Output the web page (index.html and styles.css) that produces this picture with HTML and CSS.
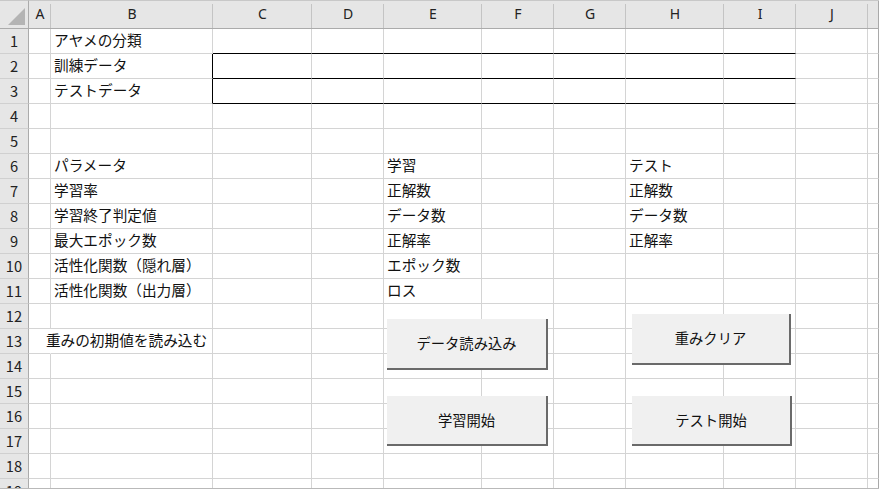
FILE: index.html
```html
<!DOCTYPE html>
<html lang="ja">
<head>
<meta charset="utf-8">
<title>アヤメの分類</title>
<link rel="stylesheet" href="styles.css">
</head>
<body>
<div class="sheet">
  <div class="row hdr">
    <div class="corner"><span class="tri"></span></div>
    <div class="ch">A</div><div class="ch">B</div><div class="ch">C</div><div class="ch">D</div><div class="ch">E</div><div class="ch">F</div><div class="ch">G</div><div class="ch">H</div><div class="ch">I</div><div class="ch">J</div><div class="ch"></div>
  </div>
  <div class="row">
    <div class="rh">1</div><div class="c"></div><div class="c">アヤメの分類</div><div class="c bb"></div><div class="c bb"></div><div class="c bb"></div><div class="c bb"></div><div class="c bb"></div><div class="c bb"></div><div class="c bb"></div><div class="c"></div><div class="c end"></div>
  </div>
  <div class="row">
    <div class="rh">2</div><div class="c"></div><div class="c br">訓練データ</div><div class="c bb"></div><div class="c bb"></div><div class="c bb"></div><div class="c bb"></div><div class="c bb"></div><div class="c bb"></div><div class="c bb"></div><div class="c"></div><div class="c end"></div>
  </div>
  <div class="row">
    <div class="rh">3</div><div class="c"></div><div class="c br">テストデータ</div><div class="c bb"></div><div class="c bb"></div><div class="c bb"></div><div class="c bb"></div><div class="c bb"></div><div class="c bb"></div><div class="c bb"></div><div class="c"></div><div class="c end"></div>
  </div>
  <div class="row">
    <div class="rh">4</div><div class="c"></div><div class="c"></div><div class="c"></div><div class="c"></div><div class="c"></div><div class="c"></div><div class="c"></div><div class="c"></div><div class="c"></div><div class="c"></div><div class="c end"></div>
  </div>
  <div class="row">
    <div class="rh">5</div><div class="c"></div><div class="c"></div><div class="c"></div><div class="c"></div><div class="c"></div><div class="c"></div><div class="c"></div><div class="c"></div><div class="c"></div><div class="c"></div><div class="c end"></div>
  </div>
  <div class="row">
    <div class="rh">6</div><div class="c"></div><div class="c">パラメータ</div><div class="c"></div><div class="c"></div><div class="c">学習</div><div class="c"></div><div class="c"></div><div class="c">テスト</div><div class="c"></div><div class="c"></div><div class="c end"></div>
  </div>
  <div class="row">
    <div class="rh">7</div><div class="c"></div><div class="c">学習率</div><div class="c"></div><div class="c"></div><div class="c">正解数</div><div class="c"></div><div class="c"></div><div class="c">正解数</div><div class="c"></div><div class="c"></div><div class="c end"></div>
  </div>
  <div class="row">
    <div class="rh">8</div><div class="c"></div><div class="c">学習終了判定値</div><div class="c"></div><div class="c"></div><div class="c">データ数</div><div class="c"></div><div class="c"></div><div class="c">データ数</div><div class="c"></div><div class="c"></div><div class="c end"></div>
  </div>
  <div class="row">
    <div class="rh">9</div><div class="c"></div><div class="c">最大エポック数</div><div class="c"></div><div class="c"></div><div class="c">正解率</div><div class="c"></div><div class="c"></div><div class="c">正解率</div><div class="c"></div><div class="c"></div><div class="c end"></div>
  </div>
  <div class="row">
    <div class="rh">10</div><div class="c"></div><div class="c">活性化関数（隠れ層）</div><div class="c"></div><div class="c"></div><div class="c">エポック数</div><div class="c"></div><div class="c"></div><div class="c"></div><div class="c"></div><div class="c"></div><div class="c end"></div>
  </div>
  <div class="row">
    <div class="rh">11</div><div class="c"></div><div class="c">活性化関数（出力層）</div><div class="c"></div><div class="c"></div><div class="c">ロス</div><div class="c"></div><div class="c"></div><div class="c"></div><div class="c"></div><div class="c"></div><div class="c end"></div>
  </div>
  <div class="row">
    <div class="rh">12</div><div class="c"></div><div class="c"></div><div class="c"></div><div class="c"></div><div class="c"></div><div class="c"></div><div class="c"></div><div class="c"></div><div class="c"></div><div class="c"></div><div class="c end"></div>
  </div>
  <div class="row">
    <div class="rh">13</div><div class="c nr"></div><div class="c center"><span>重みの初期値を読み込む</span></div><div class="c"></div><div class="c"></div><div class="c"></div><div class="c"></div><div class="c"></div><div class="c"></div><div class="c"></div><div class="c"></div><div class="c end"></div>
  </div>
  <div class="row">
    <div class="rh">14</div><div class="c"></div><div class="c"></div><div class="c"></div><div class="c"></div><div class="c"></div><div class="c"></div><div class="c"></div><div class="c"></div><div class="c"></div><div class="c"></div><div class="c end"></div>
  </div>
  <div class="row">
    <div class="rh">15</div><div class="c"></div><div class="c"></div><div class="c"></div><div class="c"></div><div class="c"></div><div class="c"></div><div class="c"></div><div class="c"></div><div class="c"></div><div class="c"></div><div class="c end"></div>
  </div>
  <div class="row">
    <div class="rh">16</div><div class="c"></div><div class="c"></div><div class="c"></div><div class="c"></div><div class="c"></div><div class="c"></div><div class="c"></div><div class="c"></div><div class="c"></div><div class="c"></div><div class="c end"></div>
  </div>
  <div class="row">
    <div class="rh">17</div><div class="c"></div><div class="c"></div><div class="c"></div><div class="c"></div><div class="c"></div><div class="c"></div><div class="c"></div><div class="c"></div><div class="c"></div><div class="c"></div><div class="c end"></div>
  </div>
  <div class="row">
    <div class="rh">18</div><div class="c"></div><div class="c"></div><div class="c"></div><div class="c"></div><div class="c"></div><div class="c"></div><div class="c"></div><div class="c"></div><div class="c"></div><div class="c"></div><div class="c end"></div>
  </div>
  <div class="row">
    <div class="rh">19</div><div class="c"></div><div class="c"></div><div class="c"></div><div class="c"></div><div class="c"></div><div class="c"></div><div class="c"></div><div class="c"></div><div class="c"></div><div class="c"></div><div class="c end"></div>
  </div>

  <button class="btn btn-load">データ読み込み</button>
  <button class="btn btn-train">学習開始</button>
  <button class="btn btn-clear">重みクリア</button>
  <button class="btn btn-test">テスト開始</button>
</div>
</body>
</html>
```
FILE: styles.css
```css
html, body {
  margin: 0;
  padding: 0;
  background: #ffffff;
}

.sheet {
  position: relative;
  width: 879px;
  height: 489px;
  box-sizing: border-box;
  border-bottom: 1px solid #b9b9b9;
  overflow: hidden;
  font-family: "Noto Sans CJK JP", "Noto Sans", sans-serif;
  font-size: 14.67px;
  color: #000;
}

.row {
  display: grid;
  grid-template-columns: 29px 22px 162px 99px 72px 98px 72px 72px 98px 72px 72px 11px;
  height: 25px;
}

.row.hdr {
  height: 29px;
}

.c, .rh, .ch, .corner {
  box-sizing: border-box;
  display: flex;
  align-items: center;
  white-space: nowrap;
  line-height: 1;
}

.c {
  border-right: 1px solid #d4d4d4;
  border-bottom: 1px solid #d4d4d4;
  padding-left: 3px;
  padding-bottom: 2px;
  color: #111;
}

.c.end {
  border-right: 1px solid #a9a9a9;
}

.c.bb {
  border-bottom-color: #000;
}

.c.br {
  border-right-color: #000;
}

.c.nr {
  border-right-color: transparent;
}

.c.center {
  justify-content: center;
  padding-left: 0;
  padding-right: 10px;
  overflow: visible;
}

.c.center span {
  background: #fff;
}

.rh {
  background: #e6e6e6;
  border-right: 1px solid #ababab;
  border-bottom: 1px solid #d0d0d0;
  justify-content: center;
  color: #222;
  font-size: 14.67px;
  padding-top: 1px;
}

.hdr .ch, .hdr .corner {
  background-color: #e6e6e6;
  border-top: 1px solid #c8c8c8;
  border-bottom: 1px solid #ababab;
}

.ch {
  justify-content: center;
  font-family: "Noto Sans", "Open Sans", sans-serif;
  font-size: 14px;
  color: #222;
  background-image: linear-gradient(#c4c4c4, #c4c4c4);
  background-size: 1px calc(100% - 3px);
  background-position: right bottom;
  background-repeat: no-repeat;
  padding-bottom: 1px;
}

.ch:last-child {
  background-image: linear-gradient(#a9a9a9, #a9a9a9);
  background-size: 1px 100%;
}

.corner {
  border-right: 1px solid #ababab;
  position: relative;
}

.tri {
  position: absolute;
  right: 3px;
  bottom: 3px;
  width: 0;
  height: 0;
  border-style: solid;
  border-width: 0 0 17px 17px;
  border-color: transparent transparent #b4b4b4 transparent;
}

.btn {
  position: absolute;
  box-sizing: border-box;
  margin: 0;
  padding: 0;
  background: #f0f0f0;
  border: none;
  border-right: 2px solid #6a6a6a;
  border-bottom: 2px solid #6a6a6a;
  font-family: "Noto Sans CJK JP", "Noto Sans", sans-serif;
  font-size: 14.3px;
  color: #111;
  line-height: 1;
}

.btn-load {
  left: 387px;
  top: 319px;
  width: 161px;
  height: 51px;
}

.btn-train {
  left: 387px;
  top: 396px;
  width: 161px;
  height: 50px;
}

.btn-clear {
  left: 632px;
  top: 314px;
  width: 159px;
  height: 51px;
}

.btn-test {
  left: 632px;
  top: 396px;
  width: 160px;
  height: 50px;
}
```
